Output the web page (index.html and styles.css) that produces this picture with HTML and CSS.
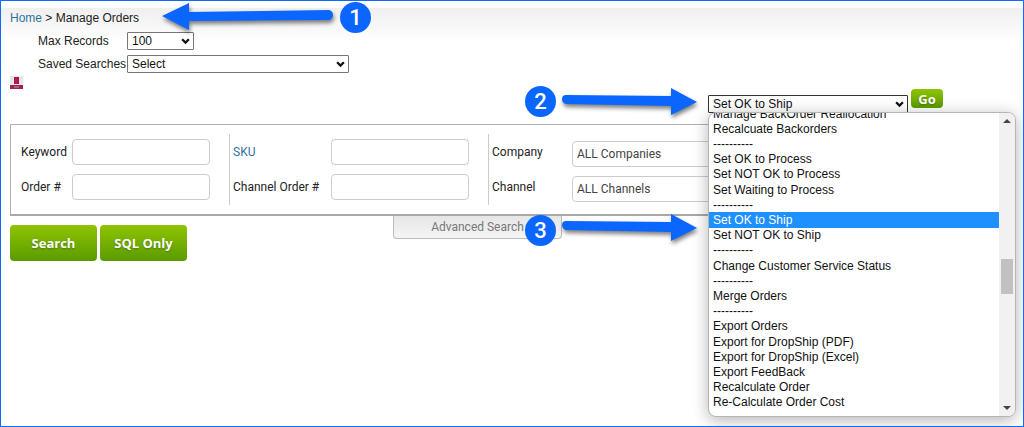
FILE: index.html
```html
<!DOCTYPE html>
<html lang="en">
<head>
    <meta charset="UTF-8">
    <meta name="viewport" content="width=device-width, initial-scale=1.0">
    <title>Manage Orders</title>
    <link rel="stylesheet" href="styles.css">
</head>
<body>
    <div class="page">
        <nav class="breadcrumb">
            <a href="#">Home</a> &gt; Manage Orders
        </nav>

        <!-- List options -->
        <div class="options">
            <div class="option-row">
                <label for="maxRecords">Max Records</label>
                <span class="select-wrap select-small">
                    <select id="maxRecords"><option>100</option></select>
                    <svg viewBox="0 0 8 6"><path d="M1 1l3 3 3-3"/></svg>
                </span>
            </div>
            <div class="option-row">
                <label for="savedSearches">Saved Searches</label>
                <span class="select-wrap select-medium">
                    <select id="savedSearches"><option>Select</option></select>
                    <svg viewBox="0 0 8 6"><path d="M1 1l3 3 3-3"/></svg>
                </span>
            </div>
        </div>
        <a href="#" class="export-icon" aria-label="Export">
            <svg viewBox="0 0 13 13">
                <rect width="13" height="13" fill="#e9e6e7"/>
                <rect x="4" y="1" width="5" height="7" fill="#a3174f"/>
                <path d="M6 1v7" stroke="#bb4a77" stroke-width=".5"/>
                <rect y="9" width="13" height="4" fill="#9c2352"/>
                <path d="M4 11h5" stroke="#cf8fa8"/>
            </svg>
        </a>

        <!-- Bulk action -->
        <div class="actions">
            <div class="action-picker">
                <span class="select-wrap select-action">
                    <select id="action" aria-label="Action"><option>Set OK to Ship</option></select>
                    <svg viewBox="0 0 8 6"><path d="M1 1l3 3 3-3"/></svg>
                </span>
                <div class="action-menu">
                    <ul class="action-list" role="listbox" aria-label="Action">
                        <li role="option">Manage BackOrder Reallocation</li>
                        <li role="option">Recalcuate Backorders</li>
                        <li role="option">----------</li>
                        <li role="option">Set OK to Process</li>
                        <li role="option">Set NOT OK to Process</li>
                        <li role="option">Set Waiting to Process</li>
                        <li role="option">----------</li>
                        <li role="option" class="selected" aria-selected="true">Set OK to Ship</li>
                        <li role="option">Set NOT OK to Ship</li>
                        <li role="option">----------</li>
                        <li role="option">Change Customer Service Status</li>
                        <li role="option">----------</li>
                        <li role="option">Merge Orders</li>
                        <li role="option">----------</li>
                        <li role="option">Export Orders</li>
                        <li role="option">Export for DropShip (PDF)</li>
                        <li role="option">Export for DropShip (Excel)</li>
                        <li role="option">Export FeedBack</li>
                        <li role="option">Recalculate Order</li>
                        <li role="option">Re-Calculate Order Cost</li>
                    </ul>
                    <div class="scrollbar">
                        <svg viewBox="0 0 8 4"><path d="M0 4l4-4 4 4z"/></svg>
                        <div class="scroll-track"><div class="scroll-thumb"></div></div>
                        <svg viewBox="0 0 8 4"><path d="M0 0l4 4 4-4z"/></svg>
                    </div>
                </div>
            </div>
            <button class="btn btn-go">Go</button>
        </div>

        <!-- Search filters -->
        <form class="filters">
            <div class="filter-col col-keyword">
                <label for="keyword">Keyword</label>
                <input type="text" id="keyword">
                <label for="orderNo">Order #</label>
                <input type="text" id="orderNo">
            </div>
            <div class="filter-col col-sku">
                <label for="sku"><a href="#">SKU</a></label>
                <input type="text" id="sku">
                <label for="channelOrderNo">Channel Order #</label>
                <input type="text" id="channelOrderNo">
            </div>
            <div class="filter-col col-company">
                <label for="company">Company</label>
                <select id="company"><option>ALL Companies</option></select>
                <label for="channel">Channel</label>
                <select id="channel"><option>ALL Channels</option></select>
            </div>
        </form>

        <div class="below">
            <div class="search-buttons">
                <button class="btn">Search</button>
                <button class="btn">SQL Only</button>
            </div>
            <button class="advanced">Advanced Search</button>
        </div>

        <!-- Numbered callouts -->
        <div class="callout callout-1">
            <svg width="180" height="36" viewBox="0 0 180 36">
                <path d="M2 17L29 4V13L169 11Q173 12 173 16Q173 20 169 21L29 22V31Z"/>
            </svg>
            <span class="badge">1</span>
        </div>
        <div class="callout callout-2">
            <span class="badge">2</span>
            <svg width="146" height="36" viewBox="0 0 146 36">
                <path d="M137 19L111 32V23L6 21Q2 20 2 16Q2 12 6 12L111 13V5Z"/>
            </svg>
        </div>
        <div class="callout callout-3">
            <span class="badge">3</span>
            <svg width="146" height="36" viewBox="0 0 146 36">
                <path d="M137 16L111 29V20L6 18Q2 17 2 13Q2 9 6 9L111 10V2Z"/>
            </svg>
        </div>
    </div>
</body>
</html>
```

FILE: styles.css
```css
* {
    box-sizing: border-box;
}

body {
    margin: 0;
    font-family: 'Liberation Sans', Arial, sans-serif;
    font-size: 12px;
    color: #222;
    background: #fff;
}

a {
    color: #2f74a0;
    text-decoration: none;
}

.page {
    position: relative;
    min-height: 100vh;
    padding: 7px 9px 0;
    border: 1px solid #0d6bf5;
    background: linear-gradient(#efefef, #fff) 0 7px / 100% 34px no-repeat;
    overflow: hidden;
}

.breadcrumb {
    height: 24px;
    padding-top: 2px;
    line-height: 16px;
}

.options {
    display: flex;
    flex-direction: column;
    gap: 5px;
    padding-left: 28px;
}

.option-row {
    display: flex;
    align-items: center;
    height: 18px;
}

.option-row label {
    width: 89px;
    white-space: nowrap;
}

/* Drop-downs with the native look */
.select-wrap {
    position: relative;
    display: block;
}

.select-wrap select {
    appearance: none;
    display: block;
    width: 100%;
    height: 18px;
    padding: 0 4px;
    border: 1px solid #767676;
    border-radius: 1px;
    background: #fff;
    color: #111;
    font: inherit;
}

.select-wrap svg {
    position: absolute;
    right: 4px;
    top: 6px;
    width: 9px;
    height: 7px;
    fill: none;
    stroke: #111;
    stroke-width: 2;
    pointer-events: none;
}

.select-small {
    width: 67px;
}

.select-medium {
    width: 222px;
}

.select-action {
    width: 200px;
}

.export-icon {
    display: block;
    width: 13px;
    height: 13px;
    margin-top: 3px;
}

.export-icon svg {
    display: block;
}

.actions {
    display: flex;
    justify-content: flex-end;
    align-items: flex-start;
    gap: 3px;
    height: 35px;
    padding-right: 71px;
}

.action-picker {
    position: relative;
    margin-top: 6px;
}

.action-picker select {
    border-color: #333;
}

/* Open action menu */
.action-menu {
    position: absolute;
    z-index: 2;
    top: 17px;
    left: 0;
    display: flex;
    width: 308px;
    height: 305px;
    border: 1px solid #b5b5b5;
    border-radius: 8px;
    background: #fff;
    box-shadow: 0 3px 16px rgba(0, 0, 0, 0.3);
    overflow: hidden;
}

.action-list {
    display: grid;
    grid-auto-rows: 1fr;
    flex: 1;
    height: 304px;
    margin: -7px 0 0;
    padding: 0;
    list-style: none;
    color: #111;
}

.action-list li {
    display: flex;
    align-items: center;
    padding-left: 4px;
}

.action-list .selected {
    background: #1e90ff;
    color: #fff;
}

.scrollbar {
    display: flex;
    flex-direction: column;
    align-items: center;
    width: 16px;
    padding: 6px 0;
    background: #f1f1f1;
}

.scrollbar svg {
    width: 8px;
    height: 4px;
    fill: #444;
}

.scroll-track {
    flex: 1;
    width: 12px;
    padding-top: 136px;
}

.scroll-thumb {
    height: 35px;
    background: #c1c1c1;
}

.btn {
    width: 87px;
    height: 36px;
    padding: 0;
    border: 0;
    border-radius: 4px;
    background: linear-gradient(#8fc400, #5a9b00);
    color: #fff;
    font: bold 13px 'Open Sans', 'Noto Sans', sans-serif;
    text-shadow: 0 1px 2px rgba(0, 0, 0, 0.3);
    cursor: pointer;
}

.btn-go {
    width: 32px;
    height: 19px;
    line-height: 18px;
}

/* Filter panel */
.filters {
    display: flex;
    padding: 9px;
    border: 1px solid #b0b0b0;
    border-bottom: 2px solid #a8a8a8;
    font-family: Roboto, sans-serif;
}

.filter-col {
    display: grid;
    grid-auto-rows: 26px;
    align-items: center;
    row-gap: 9px;
    padding: 5px 0;
}

.filter-col + .filter-col {
    padding-left: 3px;
    border-left: 1px solid #ccc;
}

.col-keyword {
    grid-template-columns: 51px 138px;
    padding-right: 19px;
    padding-left: 1px;
}

.col-sku {
    grid-template-columns: 98px 138px;
    padding-right: 19px;
}

.col-company {
    flex: 1;
    grid-template-columns: 80px 1fr;
}

.filter-col input,
.filter-col select {
    appearance: none;
    width: 100%;
    height: 26px;
    padding: 0 4px;
    border: 1px solid #ccc;
    border-radius: 4px;
    background: #fff;
    color: #444;
    font: inherit;
}

.filter-col select {
    margin-top: 3px;
}

.below {
    display: flex;
    align-items: flex-start;
}

.search-buttons {
    display: flex;
    gap: 3px;
    padding-top: 9px;
}

.advanced {
    width: 169px;
    height: 23px;
    margin-left: 206px;
    border: 1px solid #bbb;
    border-top: 0;
    border-radius: 0 0 4px 4px;
    background: linear-gradient(#e6e6e6, #f5f5f5);
    color: #777;
    font: 12px Roboto, sans-serif;
}

/* Callouts sit on top of the page */
.callout {
    position: absolute;
    z-index: 3;
    display: flex;
    align-items: center;
    gap: 4px;
}

.callout svg {
    fill: #0a66ff;
    filter: drop-shadow(1px 3px 2px rgba(0, 0, 0, 0.5));
}

.callout-1 {
    top: -2px;
    left: 159px;
    gap: 0;
}

.callout-2 {
    top: 82px;
    left: 524px;
}

.callout-3 {
    top: 211px;
    left: 524px;
}

.badge {
    width: 31px;
    height: 31px;
    border-radius: 50%;
    background: #0a66ff;
    color: #fff;
    font: 500 22px/31px Roboto, sans-serif;
    text-align: center;
}
```
